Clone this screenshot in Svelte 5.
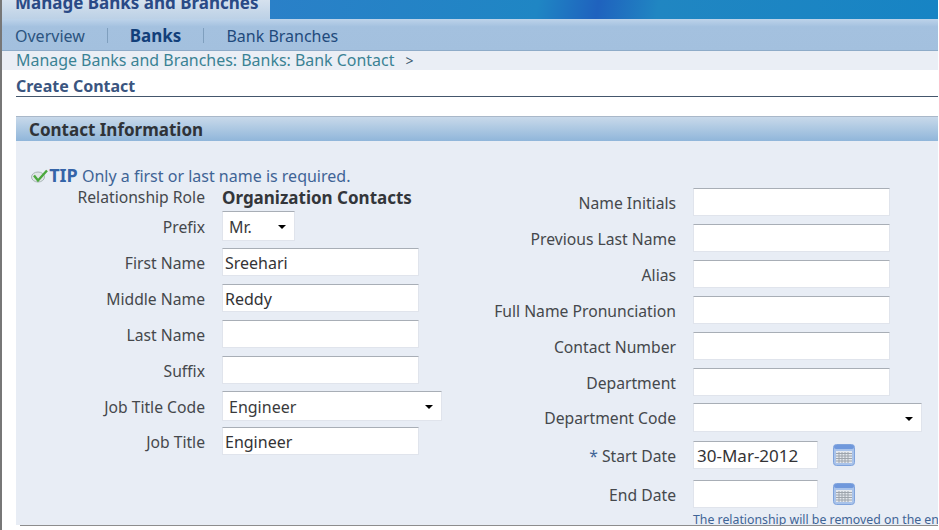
<script>
    const leftRows = [
        { label: 'First Name', value: 'Sreehari' },
        { label: 'Middle Name', value: 'Reddy' },
        { label: 'Last Name', value: '' },
        { label: 'Suffix', value: '' }
    ];

    const rightRows = [
        'Name Initials',
        'Previous Last Name',
        'Alias',
        'Full Name Pronunciation',
        'Contact Number',
        'Department'
    ];
</script>

{#snippet calendar()}
    <svg class="cal" width="22" height="22" viewBox="0 0 22 22" aria-hidden="true">
        <rect x="0.5" y="0.5" width="21" height="21" rx="3" fill="#a9c3ea" stroke="#7fa3dc"/>
        <rect x="1" y="1" width="20" height="4" rx="2" fill="#6f98dc"/>
        <rect x="3" y="7" width="16" height="12" fill="#e4e8ee"/>
        <path d="M3 9.5h16M3 12h16M3 14.5h16M3 17h16M6 8v11M9 8v11M12 8v11M15 8v11" stroke="#9da4ac" stroke-width="1"/>
    </svg>
{/snippet}

{#snippet arrow()}
    <span class="arrow"></span>
{/snippet}

<div class="page">
    <div class="top">
        <div class="tab">Manage Banks and Branches</div>
        <div class="banner"></div>
    </div>

    <nav class="nav">
        <span class="nav-item first">Overview</span>
        <span class="sep"></span>
        <span class="nav-item current">Banks</span>
        <span class="sep"></span>
        <span class="nav-item">Bank Branches</span>
    </nav>

    <div class="crumbs">Manage Banks and Branches: Banks: Bank Contact <span class="gt">&gt;</span></div>

    <div class="content">
        <h1 class="title">Create Contact</h1>

        <section class="panel">
            <h2 class="panel-head">Contact Information</h2>

            <div class="columns">
                <div class="col-left">
                    <p class="tip">
                        <svg width="20" height="14" viewBox="0 0 20 14" aria-hidden="true">
                            <ellipse cx="8" cy="8" rx="6.5" ry="5" fill="#dfe6e6" stroke="#a9b5b5"/>
                            <path d="M4 6.5l4 5 9-10" fill="none" stroke="#4aa83c" stroke-width="2.4"/>
                        </svg>
                        <b>TIP</b> Only a first or last name is required.
                    </p>

                    <div class="row role">
                        <span class="label">Relationship Role</span>
                        <strong class="static">Organization Contacts</strong>
                    </div>

                    <div class="row prefix">
                        <span class="label">Prefix</span>
                        <div class="select small">Mr.{@render arrow()}</div>
                    </div>

                    {#each leftRows as row}
                        <div class="row">
                            <span class="label">{row.label}</span>
                            <input class="input" value={row.value} readonly>
                        </div>
                    {/each}

                    <div class="row code">
                        <span class="label">Job Title Code</span>
                        <div class="select medium">Engineer{@render arrow()}</div>
                    </div>

                    <div class="row job">
                        <span class="label">Job Title</span>
                        <input class="input" value="Engineer" readonly>
                    </div>
                </div>

                <div class="col-right">
                    {#each rightRows as label}
                        <div class="row">
                            <span class="label">{label}</span>
                            <input class="input" readonly>
                        </div>
                    {/each}

                    <div class="row code">
                        <span class="label">Department Code</span>
                        <div class="select large">{@render arrow()}</div>
                    </div>

                    <div class="row date">
                        <span class="label"><i>*</i> Start Date</span>
                        <input class="input short" value="30-Mar-2012" readonly>
                        {@render calendar()}
                    </div>

                    <div class="row date end">
                        <span class="label">End Date</span>
                        <input class="input short" readonly>
                        {@render calendar()}
                    </div>

                    <p class="note">The relationship will be removed on the end date.</p>
                </div>
            </div>
        </section>
        <div class="foot"></div>
    </div>
</div>

<style>
    :global(body) {
        margin: 0;
        background: #fff;
    }

    .page {
        width: 939px;
        height: 530px;
        overflow: hidden;
        box-sizing: border-box;
        border-left: 2px solid #777;
        border-right: 1px solid #fff;
        font-family: "Noto Sans", sans-serif;
        font-size: 16px;
        color: #45484c;
    }

    .top {
        display: flex;
        height: 19px;
    }

    .tab {
        width: 268px;
        box-sizing: border-box;
        padding-left: 13px;
        background: linear-gradient(#d5e1ee, #bcd1e6);
        color: #2a4a86;
        font-weight: 700;
        font-size: 17px;
        line-height: 6px;
        white-space: nowrap;
        overflow: hidden;
    }

    .banner {
        flex: 1;
        background: linear-gradient(100deg, #2a80c8 0%, #1f86c4 40%, #1f62be 49%, #2086c2 58%, #1784c4 100%);
    }

    .nav {
        height: 32px;
        box-sizing: border-box;
        display: flex;
        align-items: center;
        padding-left: 13px;
        padding-top: 2px;
        background: linear-gradient(#bdd3ea, #a4c1df 25%, #a3c0de);
        border-bottom: 1px solid #8eabc8;
        color: #1f4a7c;
    }

    .nav-item.first {
        color: #2b5480;
    }

    .nav-item.current {
        font-weight: 700;
        font-size: 17px;
        color: #123f7a;
    }

    .sep {
        width: 1px;
        height: 15px;
        background: #7f9fbe;
        margin: 0 22px 0 22px;
    }

    .crumbs {
        height: 19px;
        box-sizing: border-box;
        padding-left: 14px;
        background: #eaeef5;
        color: #3a8294;
        font-size: 15.95px;
        line-height: 18px;
        white-space: nowrap;
    }

    .gt {
        margin-left: 7px;
        color: #3b5a70;
        font-size: 14px;
    }

    .content {
        padding-left: 14px;
    }

    .title {
        margin: 0;
        height: 27px;
        box-sizing: border-box;
        border-bottom: 1px solid #44566c;
        font-size: 16px;
        font-weight: 700;
        line-height: 32px;
        color: #3a5580;
    }

    .panel {
        margin-top: 19px;
        height: 409px;
        overflow: hidden;
        background: #e8edf5;
    }

    .foot {
        margin-left: 4px;
        border-top: 1px solid #8d8d8d;
        height: 4px;
    }

    .panel-head {
        margin: 0;
        height: 25px;
        box-sizing: border-box;
        padding-left: 13px;
        border-top: 1px solid #a9b8c9;
        background: linear-gradient(#c8d9ea, #90b6da);
        color: #2f3338;
        font-size: 17px;
        font-weight: 700;
        line-height: 26px;
    }

    .columns {
        display: flex;
    }

    .col-left {
        flex: none;
        width: 460px;
        padding-top: 24px;
    }

    .col-right {
        flex: 1;
        min-width: 0;
        padding-top: 47px;
    }

    .tip {
        margin: 0 0 0 14px;
        height: 22px;
        line-height: 20px;
        color: #3f6496;
        white-space: nowrap;
    }

    .tip b {
        font-size: 18px;
        color: #3564a8;
    }

    .tip svg {
        margin-right: -5px;
        vertical-align: -1px;
    }

    .row {
        display: flex;
        align-items: center;
        height: 28px;
        margin-bottom: 8px;
    }

    .label {
        flex: none;
        padding-top: 1px;
        font-size: 15.7px;
        text-align: right;
        white-space: nowrap;
    }

    .col-left .label {
        width: 189px;
        margin-right: 17px;
    }

    .col-right .label {
        width: 200px;
        margin-right: 17px;
    }

    .label i {
        font-style: normal;
        color: #3f6496;
    }

    .role {
        height: 20px;
        margin-bottom: 4px;
    }

    .role .label {
        padding-top: 0;
    }

    .static {
        font-size: 17px;
        color: #33363a;
    }

    .prefix {
        height: 30px;
        margin-bottom: 7px;
    }

    .code {
        height: 30px;
        margin-top: -1px;
        margin-bottom: 6px;
    }

    .col-right .code {
        height: 29px;
        margin-bottom: 9px;
    }

    .col-left .job {
        margin-bottom: 0;
    }

    .input {
        width: 197px;
        height: 28px;
        box-sizing: border-box;
        padding: 1px 2px 0;
        border: 1px solid #e0e4ec;
        border-top-color: #a8aeb6;
        background: #fff;
        font: inherit;
        color: #333336;
        outline: none;
    }

    .input.short {
        width: 125px;
        padding-left: 3px;
        font-size: 17px;
    }

    .select {
        position: relative;
        height: 100%;
        box-sizing: border-box;
        padding: 1px 0 0 6px;
        border: 1px solid #e0e4ec;
        border-top-color: #a8aeb6;
        background: #fff;
        display: flex;
        align-items: center;
        color: #3a3a3c;
    }

    .select.small {
        width: 73px;
    }

    .select.medium {
        width: 220px;
    }

    .select.large {
        width: 229px;
    }

    .arrow {
        position: absolute;
        right: 8px;
        top: 13px;
        width: 0;
        height: 0;
        border-left: 4px solid transparent;
        border-right: 4px solid transparent;
        border-top: 4px solid #000;
    }

    .date {
        margin-bottom: 11px;
    }

    .date.end {
        margin-bottom: 3px;
    }

    .cal {
        margin-left: 15px;
    }

    .note {
        margin: 0 0 0 217px;
        font-size: 12.3px;
        line-height: 18px;
        color: #3f6496;
        white-space: nowrap;
    }
</style>
